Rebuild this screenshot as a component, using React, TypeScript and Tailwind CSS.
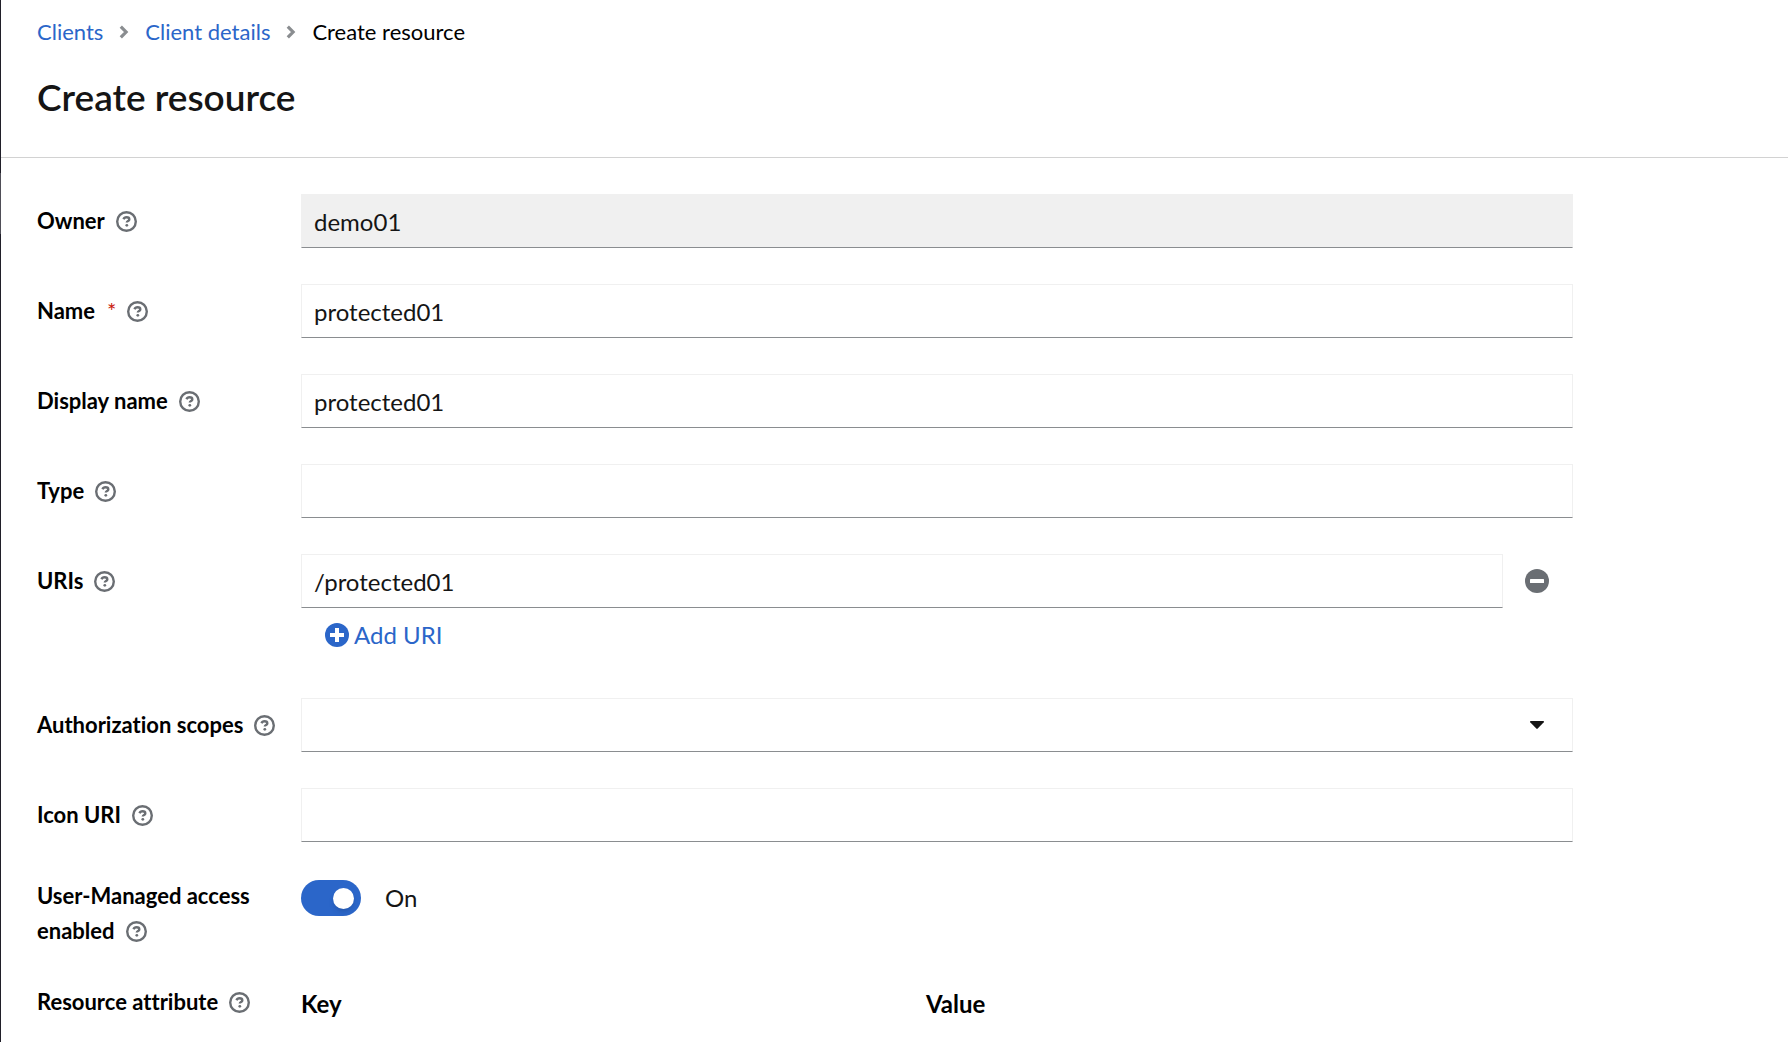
import React, { useState } from 'react';

const fieldClass =
  'block h-[54px] w-full border border-[#f0f0f0] border-b-[#8a8d90] bg-white px-3 text-2xl text-[#151515] outline-none focus:border-b-[#2b66c9] disabled:bg-[#f0f0f0]';

const HelpIcon: React.FC = () => (
  <svg viewBox="0 0 21 21" className="inline-block h-[21px] w-[21px]" fill="none" aria-hidden="true">
    <circle cx="10.5" cy="10.5" r="9.3" stroke="currentColor" strokeWidth="2.4" />
    <path
      d="M7.500 8.300C8 7 9 6.300 10.500 6.300c1.600 0 2.800.8 2.800 2.100 0 1.700-2.500 1.600-2.500 3.200"
      stroke="currentColor"
      strokeWidth="2.4"
    />
    <circle cx="10.800" cy="14.300" r="1.400" fill="currentColor" />
  </svg>
);

const Chevron: React.FC = () => (
  <svg viewBox="0 0 10 14" className="h-[14px] w-[10px] text-[#8a8d90]" fill="none" aria-hidden="true">
    <path d="M1.8 1.600 7.100 7l-5.300 5.400" stroke="currentColor" strokeWidth="3.200" />
  </svg>
);

interface RowProps {
  label: string;
  htmlFor?: string;
  required?: boolean;
  plain?: boolean;
  children: React.ReactNode;
}

const FormRow: React.FC<RowProps> = ({ label, htmlFor, required, plain, children }) => (
  <div className="grid grid-cols-[240px_1fr] gap-x-6">
    <div className={plain ? 'text-[22px] leading-[35px]' : 'pt-[9px] text-[22px] leading-[35px]'}>
      <label htmlFor={htmlFor} className="font-bold text-black">
        {label}
      </label>
      {required && <span className="ml-3 text-[#c9190b]">*</span>}
      <button type="button" aria-label={`Help for ${label}`} className="ml-[11px] inline-flex align-[-3px] text-[#6a6e73]">
        <HelpIcon />
      </button>
    </div>
    <div>{children}</div>
  </div>
);

const App: React.FC = () => {
  const [enabled, setEnabled] = useState(true);

  return (
    <div className="flex min-h-screen bg-white font-['Lato',sans-serif] text-[#151515] [font-variant-ligatures:none]">
      <div className="w-px shrink-0 bg-[#201f29]">
        <div className="mt-[173px] h-[61px] bg-[#4f4e57]" />
      </div>
      <main className="min-w-0 flex-1">
        <header className="border-b border-[#d2d2d2] px-9 pt-4 pb-9">
          <nav aria-label="Breadcrumb">
            <ol className="flex items-center text-[22px] leading-8">
              <li><a href="#clients" className="text-[#2b66c9]">Clients</a></li>
              <li className="mx-4"><Chevron /></li>
              <li><a href="#details" className="text-[#2b66c9]">Client details</a></li>
              <li className="mx-4"><Chevron /></li>
              <li aria-current="page" className="text-black">Create resource</li>
            </ol>
          </nav>
          <h1 className="mt-6 text-[37px] leading-[49px] font-semibold">Create resource</h1>
        </header>

        <form className="flex max-w-[1608px] flex-col gap-9 px-9 pt-9">
          <FormRow label="Owner" htmlFor="owner">
            <input id="owner" className={fieldClass} defaultValue="demo01" disabled />
          </FormRow>
          <FormRow label="Name" htmlFor="name" required>
            <input id="name" className={fieldClass} defaultValue="protected01" />
          </FormRow>
          <FormRow label="Display name" htmlFor="display-name">
            <input id="display-name" className={fieldClass} defaultValue="protected01" />
          </FormRow>
          <FormRow label="Type" htmlFor="type">
            <input id="type" className={fieldClass} />
          </FormRow>
          <FormRow label="URIs" htmlFor="uris">
            <div className="flex">
              <input id="uris" className={fieldClass} defaultValue="/protected01" />
              <button type="button" aria-label="Remove URI" className="flex w-[70px] shrink-0 items-center pl-[22px] text-[#6a6e73]">
                <svg viewBox="0 0 24 24" className="h-6 w-6" aria-hidden="true">
                  <circle cx="12" cy="12" r="12" fill="currentColor" />
                  <rect x="5" y="10" width="14" height="4" rx="0.5" fill="#fff" />
                </svg>
              </button>
            </div>
            <button type="button" className="flex h-[54px] items-center gap-[5px] px-6 text-2xl text-[#2b66c9]">
              <svg viewBox="0 0 24 24" className="h-6 w-6" aria-hidden="true">
                <circle cx="12" cy="12" r="12" fill="currentColor" />
                <path d="M10 5h4v5h5v4h-5v5h-4v-5H5v-4h5z" fill="#fff" />
              </svg>
              Add URI
            </button>
          </FormRow>
          <FormRow label="Authorization scopes" htmlFor="scopes">
            <div className="relative">
              <select id="scopes" className={`${fieldClass} appearance-none`} defaultValue="">
                <option value="" />
              </select>
              <svg viewBox="0 0 14 8" className="pointer-events-none absolute top-[23px] right-[29px] h-2 w-[14px]" aria-hidden="true">
                <path d="M.8 0h12.4c.8 0 1 .7.6 1.200L7.700 7.600c-.4.4-1 .4-1.400 0L.2 1.200C-.2.700 0 0 .8 0z" fill="#151515" />
              </svg>
            </div>
          </FormRow>
          <FormRow label="Icon URI" htmlFor="icon-uri">
            <input id="icon-uri" className={fieldClass} />
          </FormRow>
          <FormRow label="User-Managed access enabled" htmlFor="uma" plain>
            <label className="inline-flex h-10 items-center gap-6 text-2xl">
              <input
                id="uma"
                type="checkbox"
                role="switch"
                className="peer sr-only"
                checked={enabled}
                onChange={(e) => setEnabled(e.target.checked)}
              />
              <span className="flex h-9 w-[60px] items-center rounded-full bg-[#8a8d90] px-[7px] peer-checked:justify-end peer-checked:bg-[#2b66c9]">
                <span className="h-[21px] w-[21px] rounded-full bg-white shadow-md" />
              </span>
              {enabled ? 'On' : 'Off'}
            </label>
          </FormRow>
          <FormRow label="Resource attribute" plain>
            <div className="grid grid-cols-2 pr-[22px] text-2xl leading-10 font-bold text-black">
              <span>Key</span>
              <span>Value</span>
            </div>
          </FormRow>
        </form>
      </main>
    </div>
  );
};

export default App;
